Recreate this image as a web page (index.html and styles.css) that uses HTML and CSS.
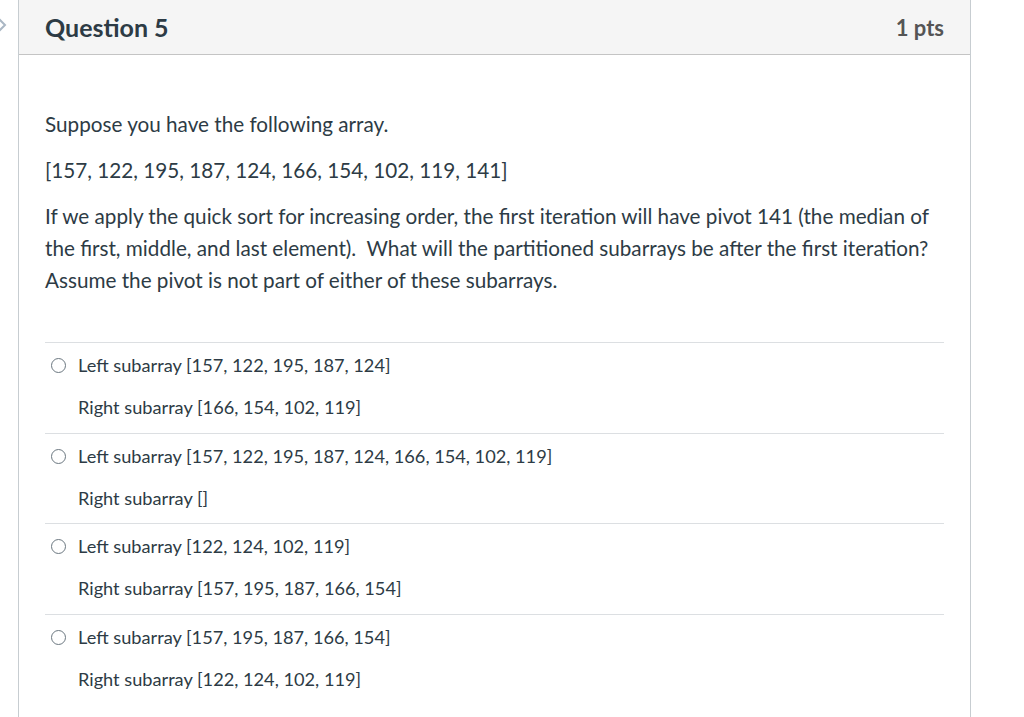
FILE: index.html
```html
<!DOCTYPE html>
<html lang="en">
<head>
<meta charset="utf-8">
<title>Question 5</title>
<link rel="stylesheet" href="styles.css">
</head>
<body>
<div class="page">
  <div class="side">
    <svg class="chev" width="18" height="54" viewBox="0 0 18 54" aria-hidden="true">
      <polyline points="-3,17 5,25 -3,33" fill="none" stroke="#aab7c4" stroke-width="2"/>
    </svg>
  </div>
  <div class="card">
    <div class="card-header">
      <h2 class="q-title">Question 5</h2>
      <span class="q-pts">1 pts</span>
    </div>
    <div class="card-body">
      <div class="q-text">
        <p>Suppose you have the following array.</p>
        <p>[157, 122, 195, 187, 124, 166, 154, 102, 119, 141]</p>
        <p>If we apply the quick sort for increasing order, the first iteration will have pivot 141 (the median of the first, middle, and last element).&nbsp; What will the partitioned subarrays be after the first iteration?&nbsp; Assume the pivot is not part of either of these subarrays.</p>
      </div>
      <div class="answers">
        <label class="answer">
          <span class="radio"></span>
          <span class="answer-text">
            <span class="line">Left subarray [157, 122, 195, 187, 124]</span>
            <span class="line">Right subarray [166, 154, 102, 119]</span>
          </span>
        </label>
        <label class="answer">
          <span class="radio"></span>
          <span class="answer-text">
            <span class="line">Left subarray [157, 122, 195, 187, 124, 166, 154, 102, 119]</span>
            <span class="line">Right subarray []</span>
          </span>
        </label>
        <label class="answer">
          <span class="radio"></span>
          <span class="answer-text">
            <span class="line">Left subarray [122, 124, 102, 119]</span>
            <span class="line">Right subarray [157, 195, 187, 166, 154]</span>
          </span>
        </label>
        <label class="answer">
          <span class="radio"></span>
          <span class="answer-text">
            <span class="line">Left subarray [157, 195, 187, 166, 154]</span>
            <span class="line">Right subarray [122, 124, 102, 119]</span>
          </span>
        </label>
      </div>
    </div>
  </div>
</div>
</body>
</html>
```

FILE: styles.css
```css
html, body {
  margin: 0;
  padding: 0;
  background: #ffffff;
}

body {
  font-family: Lato, "Liberation Sans", sans-serif;
  color: #2d3b45;
  height: 717px;
  overflow: hidden;
}

.page {
  display: flex;
  align-items: flex-start;
}

.side {
  width: 18px;
  flex: none;
}

.chev {
  display: block;
}

.card {
  width: 951px;
  flex: none;
  border-left: 1px solid #c7cdd1;
  border-right: 1px solid #c7cdd1;
  min-height: 717px;
}

.card-header {
  height: 55px;
  box-sizing: border-box;
  background: #f5f5f5;
  border-bottom: 1px solid #c4c4c4;
  display: flex;
  align-items: center;
  justify-content: space-between;
  padding: 0 26px 0 26px;
}

.q-title {
  margin: 0;
  font-size: 25px;
  font-weight: 700;
  color: #2d3b45;
}

.q-pts {
  font-size: 22px;
  font-weight: 700;
  color: #555555;
}

.card-body {
  padding: 53px 26px 0 26px;
}

.q-text p {
  margin: 0 0 14px 0;
  font-size: 20.7px;
  line-height: 32px;
}

.answers {
  margin-top: 46px;
}

.answer {
  display: flex;
  align-items: flex-start;
  border-top: 1px solid #dcdfe2;
  padding: 11px 0 14.67px 6px;
}

.radio {
  width: 13px;
  height: 13px;
  border: 1px solid #6b7780;
  border-radius: 50%;
  flex: none;
  margin: 4px 12px 0 0;
}

.answer-text {
  display: flex;
  flex-direction: column;
}

.line {
  font-size: 18.2px;
  line-height: 22px;
  padding-bottom: 20px;
}

.line:last-child {
  padding-bottom: 0;
}
```
